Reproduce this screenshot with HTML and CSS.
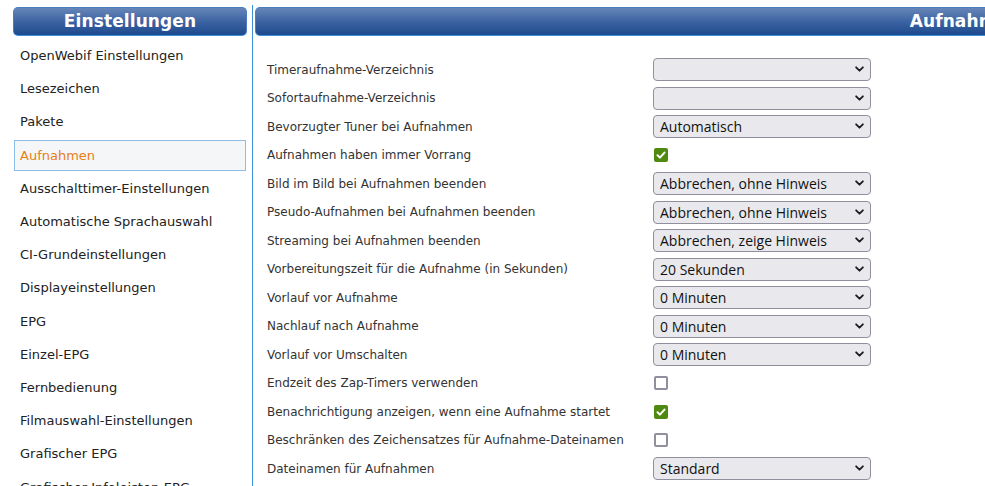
FILE: index.html
```html
<!DOCTYPE html>
<html lang="de">
<head>
<meta charset="utf-8">
<title>Einstellungen</title>
<link rel="stylesheet" href="styles.css">
</head>
<body>
<div class="page">
  <aside class="side">
    <div class="head">Einstellungen</div>
    <ul class="menu">
      <li class="item">OpenWebif Einstellungen</li>
      <li class="item">Lesezeichen</li>
      <li class="item">Pakete</li>
      <li class="item active">Aufnahmen</li>
      <li class="item">Ausschalttimer-Einstellungen</li>
      <li class="item">Automatische Sprachauswahl</li>
      <li class="item">CI-Grundeinstellungen</li>
      <li class="item">Displayeinstellungen</li>
      <li class="item">EPG</li>
      <li class="item">Einzel-EPG</li>
      <li class="item">Fernbedienung</li>
      <li class="item">Filmauswahl-Einstellungen</li>
      <li class="item">Grafischer EPG</li>
      <li class="item">Grafischer Infoleisten-EPG</li>
    </ul>
  </aside>
  <main class="main">
    <div class="head">Aufnahmen</div>
    <div class="form">
      <div class="row"><span class="label">Timeraufnahme-Verzeichnis</span><span class="sel"><select><option></option></select><svg class="chev" viewBox="0 0 8 5"><path d="M1 1l3 3 3-3"/></svg></span></div>
      <div class="row"><span class="label">Sofortaufnahme-Verzeichnis</span><span class="sel"><select><option></option></select><svg class="chev" viewBox="0 0 8 5"><path d="M1 1l3 3 3-3"/></svg></span></div>
      <div class="row"><span class="label">Bevorzugter Tuner bei Aufnahmen</span><span class="sel"><select><option>Automatisch</option></select><svg class="chev" viewBox="0 0 8 5"><path d="M1 1l3 3 3-3"/></svg></span></div>
      <div class="row"><span class="label">Aufnahmen haben immer Vorrang</span><span class="cb on"><svg viewBox="0 0 14 14"><path d="M3.5 7.2l2.4 2.4 4.6-5"/></svg></span></div>
      <div class="row"><span class="label">Bild im Bild bei Aufnahmen beenden</span><span class="sel"><select><option>Abbrechen, ohne Hinweis</option></select><svg class="chev" viewBox="0 0 8 5"><path d="M1 1l3 3 3-3"/></svg></span></div>
      <div class="row"><span class="label">Pseudo-Aufnahmen bei Aufnahmen beenden</span><span class="sel"><select><option>Abbrechen, ohne Hinweis</option></select><svg class="chev" viewBox="0 0 8 5"><path d="M1 1l3 3 3-3"/></svg></span></div>
      <div class="row"><span class="label">Streaming bei Aufnahmen beenden</span><span class="sel"><select><option>Abbrechen, zeige Hinweis</option></select><svg class="chev" viewBox="0 0 8 5"><path d="M1 1l3 3 3-3"/></svg></span></div>
      <div class="row"><span class="label">Vorbereitungszeit für die Aufnahme (in Sekunden)</span><span class="sel"><select><option>20 Sekunden</option></select><svg class="chev" viewBox="0 0 8 5"><path d="M1 1l3 3 3-3"/></svg></span></div>
      <div class="row"><span class="label">Vorlauf vor Aufnahme</span><span class="sel"><select><option>0 Minuten</option></select><svg class="chev" viewBox="0 0 8 5"><path d="M1 1l3 3 3-3"/></svg></span></div>
      <div class="row"><span class="label">Nachlauf nach Aufnahme</span><span class="sel"><select><option>0 Minuten</option></select><svg class="chev" viewBox="0 0 8 5"><path d="M1 1l3 3 3-3"/></svg></span></div>
      <div class="row"><span class="label">Vorlauf vor Umschalten</span><span class="sel"><select><option>0 Minuten</option></select><svg class="chev" viewBox="0 0 8 5"><path d="M1 1l3 3 3-3"/></svg></span></div>
      <div class="row"><span class="label">Endzeit des Zap-Timers verwenden</span><span class="cb"></span></div>
      <div class="row"><span class="label">Benachrichtigung anzeigen, wenn eine Aufnahme startet</span><span class="cb on"><svg viewBox="0 0 14 14"><path d="M3.5 7.2l2.4 2.4 4.6-5"/></svg></span></div>
      <div class="row"><span class="label">Beschränken des Zeichensatzes für Aufnahme-Dateinamen</span><span class="cb"></span></div>
      <div class="row"><span class="label">Dateinamen für Aufnahmen</span><span class="sel"><select><option>Standard</option></select><svg class="chev" viewBox="0 0 8 5"><path d="M1 1l3 3 3-3"/></svg></span></div>
      <div class="row"><span class="label">Aufnahme-Dateinamen</span><span class="sel"><select><option>Standard</option></select><svg class="chev" viewBox="0 0 8 5"><path d="M1 1l3 3 3-3"/></svg></span></div>
    </div>
  </main>
</div>
</body>
</html>
```

FILE: styles.css
```css
html, body {
  margin: 0;
  padding: 0;
  background: #fff;
  overflow: hidden;
  height: 486px;
}
body {
  font-family: "DejaVu Sans", Verdana, sans-serif;
  color: #222;
}
.page {
  display: flex;
  align-items: flex-start;
  padding: 5px 0 0 13px;
  width: 1700px;
}
.side {
  width: 234px;
  flex-shrink: 0;
  padding-top: 2px;
}
.head {
  height: 27px;
  border: 1px solid #4a7cc0;
  border-bottom-color: #3d8fdc;
  border-radius: 5px;
  background: linear-gradient(to bottom, #6686b8 0%, #3c63a2 50%, #1d4a8e 100%);
  color: #fff;
  font-weight: bold;
  font-size: 17px;
  line-height: 27px;
  text-align: center;
  letter-spacing: 0.1px;
}
.menu {
  list-style: none;
  margin: 0;
  padding: 4px 0 0;
}
.item {
  height: 31.2px;
  margin: 0 0 2px 1px;
  width: 232px;
  box-sizing: border-box;
  padding-left: 5px;
  display: flex;
  align-items: center;
  font-size: 13px;
  color: #222;
  border: 1px solid transparent;
  white-space: nowrap;
}
.item.active {
  border-color: #8ebde6;
  background: #f4f6f8;
  color: #e87e12;
}
.main {
  width: 1420px;
  flex-shrink: 0;
  margin-left: 5px;
  border-left: 1px solid #3d8fd6;
  padding: 2px 0 0 2px;
  height: 500px;
}
.form {
  margin-top: 19.5px;
  padding-left: 12px;
}
.row {
  display: grid;
  grid-template-columns: 386px 218px;
  align-items: center;
  height: 28.5px;
}
.label {
  font-size: 12px;
  color: #333;
  white-space: nowrap;
}
.sel {
  position: relative;
  display: block;
  width: 218px;
  height: 23px;
}
.sel select {
  appearance: none;
  -webkit-appearance: none;
  width: 218px;
  height: 23px;
  box-sizing: border-box;
  margin: 0;
  border: 1px solid #8f8f9d;
  border-radius: 4px;
  background: #e9e9ed;
  font-family: "Open Sans", "Noto Sans", sans-serif;
  font-size: 14px;
  color: #111;
  padding: 0 0 0 6px;
  line-height: 21px;
}
.chev {
  position: absolute;
  right: 7px;
  top: 8px;
  width: 9px;
  height: 6px;
  fill: none;
  stroke: #1b1b1b;
  stroke-width: 1.6;
  stroke-linecap: round;
  stroke-linejoin: round;
  pointer-events: none;
}
.cb {
  display: block;
  width: 14px;
  height: 14px;
  box-sizing: border-box;
  margin-left: 1px;
  border: 2px solid #8f8f9d;
  border-radius: 2px;
  background: #fff;
}
.cb.on {
  border: none;
  background: #4e8a10;
}
.cb svg {
  display: block;
  width: 14px;
  height: 14px;
  fill: none;
  stroke: #fff;
  stroke-width: 2;
  stroke-linecap: round;
  stroke-linejoin: round;
}
```
